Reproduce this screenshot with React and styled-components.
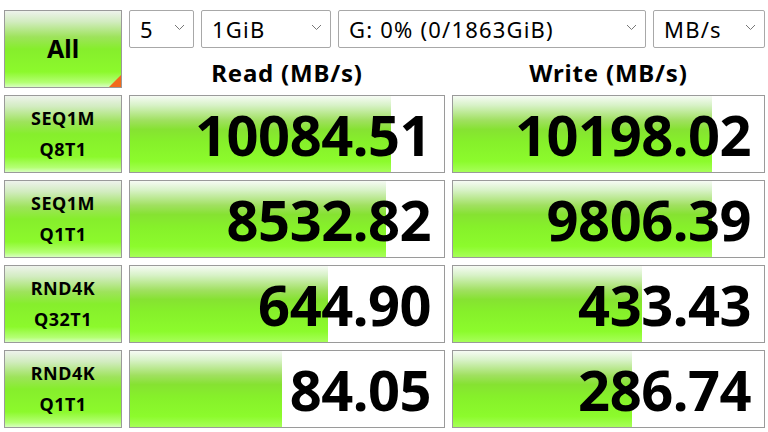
import React from 'react';
import styled, { createGlobalStyle } from 'styled-components';

const GlobalStyle = createGlobalStyle`
  html, body {
    margin: 0;
    padding: 0;
    background: #ffffff;
    width: 768px;
    height: 432px;
    overflow: hidden;
  }
  body {
    font-family: "Noto Sans", "Open Sans", sans-serif;
    color: #000;
  }
`;

const Board = styled.div`
  display: grid;
  grid-template-columns: 118px 316px 313px;
  grid-template-rows: repeat(5, 78px);
  column-gap: 7px;
  row-gap: 7px;
  padding: 10px 0 0 4px;
`;

const greenFace = `linear-gradient(to bottom,
  #eef3ec 0%, #d2ecc0 14%, #9ee35c 34%, #86ee2c 50%,
  #8cf92c 80%, #b4ff74 94%, #d8ffc0 100%)`;

const AllButton = styled.div`
  position: relative;
  box-sizing: border-box;
  border: 1px solid #9a9a9a;
  background: ${greenFace};
  display: flex;
  align-items: center;
  justify-content: center;
  font-weight: 700;
  font-size: 25px;
  padding-bottom: 2px;
  &::after {
    content: '';
    position: absolute;
    right: 0;
    bottom: 0;
    width: 0;
    height: 0;
    border-style: solid;
    border-width: 0 0 12px 12px;
    border-color: transparent transparent #f26a1b transparent;
  }
`;

const TopPanel = styled.div`
  grid-column: 2 / 4;
  display: grid;
  grid-template-columns: 316px 313px;
  grid-template-rows: 38px 1fr;
  column-gap: 7px;
`;

const SelectBar = styled.div`
  grid-column: 1 / 3;
  display: flex;
  gap: 7px;
`;

const Select = styled.div`
  box-sizing: border-box;
  width: ${({ w }) => (w ? `${w}px` : 'auto')};
  flex: ${({ w }) => (w ? 'none' : '1')};
  height: 38px;
  border: 1px solid #a8a8a8;
  border-radius: 2px;
  background: #fff;
  display: flex;
  align-items: center;
  justify-content: space-between;
  padding: 0 8px 0 10px;
  font-size: 22px;
  letter-spacing: 1.2px;
  white-space: nowrap;
  overflow: hidden;
`;

const Chevron = () => (
  <svg width="11" height="7" viewBox="0 0 11 7" style={{ flex: 'none', marginBottom: 4 }}>
    <path d="M1 1 L5.5 5.5 L10 1" fill="none" stroke="#777" strokeWidth="1" />
  </svg>
);

const ColumnHead = styled.div`
  display: flex;
  align-items: flex-end;
  justify-content: center;
  font-weight: 700;
  font-size: 24px;
  letter-spacing: 0.8px;
  padding-bottom: 3px;
  line-height: 1;
`;

const Label = styled.div`
  box-sizing: border-box;
  border: 1px solid #9a9a9a;
  background: ${greenFace};
  display: flex;
  flex-direction: column;
  align-items: center;
  justify-content: center;
  font-weight: 700;
  font-size: 18px;
  letter-spacing: 0.5px;
  line-height: 31px;
`;

const Cell = styled.div`
  position: relative;
  box-sizing: border-box;
  border: 1px solid #9a9a9a;
  background: #fff;
  overflow: hidden;
`;

const Bar = styled.div`
  position: absolute;
  left: 0;
  top: 0;
  bottom: 0;
  background: linear-gradient(to bottom,
    #f6fbf4 0%, #d8f2c8 12%, #a0e060 32%, #86e232 44%,
    #86f02a 60%, #8cfb2c 86%, #a6ff58 100%);
`;

const Value = styled.div`
  position: relative;
  height: 100%;
  display: flex;
  align-items: center;
  justify-content: flex-end;
  padding-right: 13px;
  font-weight: 700;
  font-size: 56px;
  letter-spacing: -0.5px;
  line-height: 1;
`;

const rows = [
  { a: 'SEQ1M', b: 'Q8T1', read: '10084.51', write: '10198.02', rp: 0.83, wp: 0.834 },
  { a: 'SEQ1M', b: 'Q1T1', read: '8532.82', write: '9806.39', rp: 0.815, wp: 0.834 },
  { a: 'RND4K', b: 'Q32T1', read: '644.90', write: '433.43', rp: 0.63, wp: 0.607 },
  { a: 'RND4K', b: 'Q1T1', read: '84.05', write: '286.74', rp: 0.485, wp: 0.575 },
];

const Result = ({ value, pct }) => (
  <Cell>
    <Bar style={{ width: `${pct * 100}%` }} />
    <Value>{value}</Value>
  </Cell>
);

export default function App() {
  return (
    <>
      <GlobalStyle />
      <Board>
        <AllButton>All</AllButton>
        <TopPanel>
          <SelectBar>
            <Select w={65}>5<Chevron /></Select>
            <Select w={130}>1GiB<Chevron /></Select>
            <Select w={308}>G: 0% (0/1863GiB)<Chevron /></Select>
            <Select>MB/s<Chevron /></Select>
          </SelectBar>
          <ColumnHead>Read (MB/s)</ColumnHead>
          <ColumnHead>Write (MB/s)</ColumnHead>
        </TopPanel>
        {rows.map((r, i) => (
          <React.Fragment key={i}>
            <Label>
              <span>{r.a}</span>
              <span>{r.b}</span>
            </Label>
            <Result value={r.read} pct={r.rp} />
            <Result value={r.write} pct={r.wp} />
          </React.Fragment>
        ))}
      </Board>
    </>
  );
}
